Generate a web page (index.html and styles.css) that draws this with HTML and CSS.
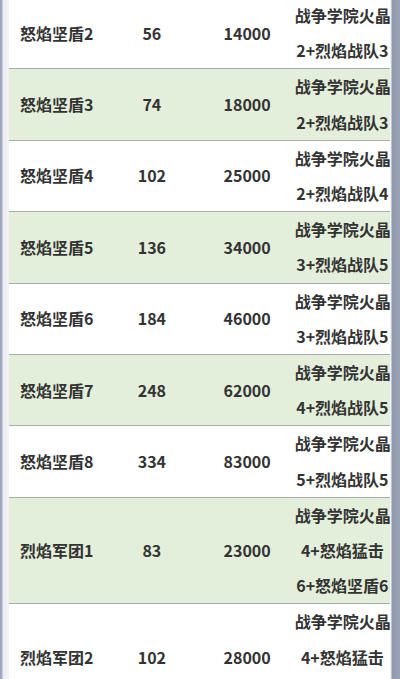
FILE: index.html
```html
<!DOCTYPE html>
<html lang="zh-CN">
<head>
<meta charset="utf-8">
<title>怒焰坚盾</title>
<link rel="stylesheet" href="styles.css">
</head>
<body>
<div class="page">
<table class="grid">
<tbody>
<tr><td>怒焰坚盾2</td><td>56</td><td>14000</td><td>战争学院火晶<br>2+烈焰战队3</td></tr>
<tr class="alt"><td>怒焰坚盾3</td><td>74</td><td>18000</td><td>战争学院火晶<br>2+烈焰战队3</td></tr>
<tr><td>怒焰坚盾4</td><td>102</td><td>25000</td><td>战争学院火晶<br>2+烈焰战队4</td></tr>
<tr class="alt"><td>怒焰坚盾5</td><td>136</td><td>34000</td><td>战争学院火晶<br>3+烈焰战队5</td></tr>
<tr><td>怒焰坚盾6</td><td>184</td><td>46000</td><td>战争学院火晶<br>3+烈焰战队5</td></tr>
<tr class="alt"><td>怒焰坚盾7</td><td>248</td><td>62000</td><td>战争学院火晶<br>4+烈焰战队5</td></tr>
<tr><td>怒焰坚盾8</td><td>334</td><td>83000</td><td>战争学院火晶<br>5+烈焰战队5</td></tr>
<tr class="alt"><td>烈焰军团1</td><td>83</td><td>23000</td><td>战争学院火晶<br>4+怒焰猛击<br>6+怒焰坚盾6</td></tr>
<tr><td>烈焰军团2</td><td>102</td><td>28000</td><td>战争学院火晶<br>4+怒焰猛击<br>6+怒焰坚盾6</td></tr>
</tbody>
</table>
</div>
</body>
</html>
```
FILE: styles.css
```css
html, body {
  margin: 0;
  padding: 0;
  height: 100%;
  overflow: hidden;
}
body {
  background:
    linear-gradient(to right,
      #98a0ba 0, #a9aec4 2px, #e9eaf0 3px, #f2f2f6 8px,
      #f2f2f6 391px, #8f98ad 392px, #9ba2b6 400px);
  font-family: "Noto Sans CJK SC", "Noto Sans", sans-serif;
  color: #333333;
}
.page {
  margin-left: 9px;
  width: 381px;
  margin-top: -2px;
}
.grid {
  width: 381px;
  border-collapse: collapse;
  table-layout: fixed;
  background: #ffffff;
}
.grid td {
  padding: 0;
  text-align: center;
  vertical-align: middle;
  font-size: 16px;
  font-weight: 700;
  line-height: 35.2px;
  border-bottom: 1px solid #a9aea9;
  white-space: nowrap;
}
.grid tr.alt td {
  background: #e3efda;
}
```
